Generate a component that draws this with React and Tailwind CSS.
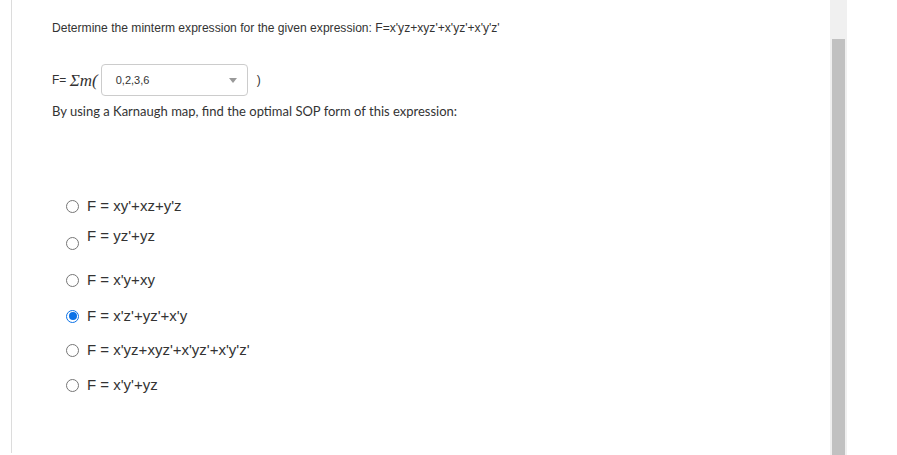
import { useState } from "react";

const options = [
  { label: "F = xy'+xz+y'z", mt: "" },
  { label: "F = yz'+yz", mt: "mt-[10px]", low: true },
  { label: "F = x'y+xy", mt: "mt-[24px]" },
  { label: "F = x'z'+yz'+x'y", mt: "mt-[16px]" },
  { label: "F = x'yz+xyz'+x'yz'+x'y'z'", mt: "mt-[14px]" },
  { label: "F = x'y'+yz", mt: "mt-[15px]" },
];

function Radio({ checked }) {
  if (checked) {
    return (
      <span className="w-[13px] h-[13px] rounded-full border-[1.5px] border-[#0b72e7] bg-white flex items-center justify-center">
        <span className="w-[8px] h-[8px] rounded-full bg-[#0b72e7]" />
      </span>
    );
  }
  return <span className="block w-[13px] h-[13px] rounded-full border border-[#767676] bg-white" />;
}

export default function App() {
  const [picked, setPicked] = useState(3);

  return (
    <div className="w-[897px] h-[455px] bg-white flex overflow-hidden">
      <div className="w-[11px] shrink-0" />
      <div className="w-px bg-[#dcdcdc] h-[453px] shrink-0" />
      <div className="flex-1 pl-[40px] pt-[20px] text-[#333]">
        <p className="text-[12.1px] leading-[16px] font-['Liberation_Sans',Arial,sans-serif]">
          Determine the minterm expression for the given expression: F=x'yz+xyz'+x'yz'+x'y'z'
        </p>

        <div className="mt-[28px] flex items-center h-[32px] font-['Liberation_Sans',Arial,sans-serif] text-[12px]">
          <span>F=&nbsp;</span>
          <span className="font-['Liberation_Serif',serif] italic text-[17px] leading-none">Σm(</span>
          <div className="ml-[3px] w-[147px] h-[32px] border border-[#cccccc] rounded-[4px] flex items-center justify-between pl-[14px] pr-[10px] text-[11px]">
            <span>0,2,3,6</span>
            <svg width="8" height="5" viewBox="0 0 8 5">
              <path d="M0 0h8L4 5z" fill="#999" />
            </svg>
          </div>
          <span className="ml-[9px]">)</span>
        </div>

        <p className="mt-[5px] text-[13px] leading-[20px] font-['Lato','Noto_Sans',sans-serif]">
          By using a Karnaugh map, find the optimal SOP form of this expression:
        </p>

        <div className="mt-[75px] pl-[14px] font-['Liberation_Sans',Arial,sans-serif] text-[15px]">
          {options.map((o, i) => (
            <label
              key={o.label}
              className={`flex items-center gap-[8px] h-[20px] cursor-pointer ${o.mt}`}
              onClick={() => setPicked(i)}
            >
              <span className={`flex shrink-0 ${o.low ? "mt-[14px]" : ""}`}>
                <Radio checked={picked === i} />
              </span>
              <span className="leading-[20px]">{o.label}</span>
            </label>
          ))}
        </div>
      </div>
      <div className="w-[17px] h-full bg-[#f0f0f0] shrink-0 mr-[50px] pt-[39px] flex justify-center">
        <div className="w-[13px] h-full bg-[#c1c1c1]" />
      </div>
    </div>
  );
}
